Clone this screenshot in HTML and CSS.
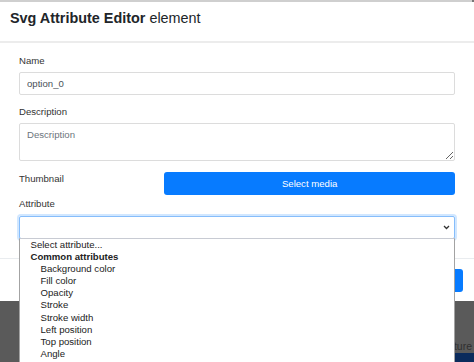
FILE: index.html
```html
<!DOCTYPE html>
<html lang="en">
<head>
    <meta charset="UTF-8">
    <meta name="viewport" content="width=device-width, initial-scale=1.0">
    <title>Svg Attribute Editor</title>
    <link rel="stylesheet" href="styles.css">
</head>
<body>
    <div class="topbar"><span class="corner"></span></div>
    <div class="modal">
        <div class="modal-header">
            <h5 class="modal-title"><b>Svg Attribute Editor</b> element</h5>
        </div>
        <div class="modal-body">
            <div class="form-group">
                <label for="name">Name</label>
                <input type="text" id="name" class="form-control" value="option_0">
            </div>
            <div class="form-group">
                <label for="description">Description</label>
                <textarea id="description" class="form-control" placeholder="Description"></textarea>
            </div>
            <div class="row">
                <label class="row-label">Thumbnail</label>
                <button class="btn btn-primary">Select media</button>
            </div>
            <label>Attribute</label>
            <div class="select">
                <svg width="7" height="5" viewBox="0 0 7 5"><path d="M1 1l2.5 2.5L6 1" fill="none" stroke="#333" stroke-width="1.3"/></svg>
            </div>
        </div>
        <div class="modal-footer">
            <button class="btn btn-primary btn-save">Save</button>
        </div>
    </div>
    <div class="page-behind">
        <span class="behind-text">Picture</span>
        <div class="navbar-strip"></div>
    </div>

    <div class="dropdown-list">
        <div class="option">Select attribute...</div>
        <div class="optgroup">Common attributes</div>
        <div class="option child">Background color</div>
        <div class="option child">Fill color</div>
        <div class="option child">Opacity</div>
        <div class="option child">Stroke</div>
        <div class="option child">Stroke width</div>
        <div class="option child">Left position</div>
        <div class="option child">Top position</div>
        <div class="option child">Angle</div>
    </div>
</body>
</html>
```

FILE: styles.css
```css
* { box-sizing: border-box; }
body { margin: 0; font-family: "Liberation Sans", Arial, sans-serif; font-size: 9.6px; color: #212529; background: #5a5a5a; width: 474px; height: 362px; overflow: hidden; position: relative; }
.topbar { height: 2px; background: #cfcfcf; display: flex; justify-content: flex-end; }
.corner { width: 2px; background: #777; }
.modal { background: #fff; }
.modal-header { height: 41px; padding: 8.4px 10px 0; border-bottom: 2px solid #ececec; }
.modal-title { margin: 0; font-size: 14.4px; line-height: 17px; font-weight: normal; color: #212529; }
.modal-body { padding: 11.7px 19px 19px; }
.form-group { margin-bottom: 11px; }
label { display: block; line-height: 12px; margin-bottom: 5.6px; color: #333; }
.form-control { display: block; width: 100%; height: 22.4px; padding: 4px 7px; font: inherit; line-height: 12px; color: #495057; background: #fff; border: 1px solid #dcdcdc; border-radius: 2px; outline: none; }
textarea.form-control { height: 37.7px; padding: 5px 7px; resize: vertical; }
.form-control::placeholder { color: #6c757d; }
.row { display: grid; grid-template-columns: 1fr 2fr; margin-bottom: 3px; }
.row-label { padding-top: 1px; margin: 0; }
.btn { font: inherit; border: none; border-radius: 3px; height: 23px; cursor: pointer; }
.btn-primary { background: #077bff; color: #fff; }
.select { height: 23.4px; border: 1px solid #86bdfb; border-radius: 2px; box-shadow: 0 0 0 2px rgba(0, 123, 255, 0.18); display: flex; justify-content: flex-end; align-items: center; padding-right: 4px; }
.modal-footer { border-top: 1px solid #e9ecef; padding: 10px 11px 9px; display: flex; justify-content: flex-end; }
.btn-save { width: 60px; }
.page-behind { height: 61px; display: flex; flex-direction: column; justify-content: flex-end; align-items: flex-end; }
.behind-text { font-size: 10.5px; line-height: 12px; color: #2f2f2f; padding-right: 2px; margin-bottom: 1px; }
.navbar-strip { height: 9px; width: 300px; background: #0b2b5c; }
.dropdown-list { position: absolute; left: 19px; top: 238px; width: 436px; height: 130px; background: #fff; border: 1px solid #a3a3a3; border-top-color: #c8cbd3; color: #222; }
.option { line-height: 12.1px; padding-left: 10.5px; white-space: nowrap; }
.optgroup { line-height: 12.1px; padding-left: 10.5px; font-weight: bold; }
.option.child { padding-left: 20.5px; }
```
